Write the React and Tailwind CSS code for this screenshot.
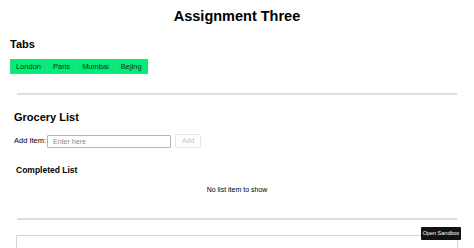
import React from "react";

const App = () => {
  const tabs = ["London", "Paris", "Mumbai", "Bejing"];

  return (
    <div className="relative w-[474px] h-[248px] overflow-hidden bg-white text-black font-['Liberation_Sans',Arial,sans-serif]">
      <h1 className="text-center text-[14.5px] font-bold pt-[7px] leading-[18px]">Assignment Three</h1>

      {/* Tabs */}
      <div className="px-[10px] mt-[12px]">
        <h2 className="text-[11px] font-bold leading-[14px]">Tabs</h2>
        <div className="flex mt-[8px]">
          {tabs.map((t) => (
            <button
              key={t}
              className="h-[15px] px-[5px] bg-[#00ee77] border border-[#2fd882] text-[7.5px] leading-[13px] text-[#0b2e1a]"
            >
              {t}
            </button>
          ))}
        </div>
      </div>

      <div className="mx-[17px] mt-[19px] h-[2px] bg-[#dedede]" />

      {/* Grocery list */}
      <div className="px-[14px] mt-[15px]">
        <h2 className="text-[11px] font-bold leading-[14px]">Grocery List</h2>
        <div className="flex items-center mt-[10px] text-[7.5px] text-black">
          <span className="mr-[1px]">Add Item:</span>
          <input
            placeholder="Enter here"
            className="w-[124px] h-[13px] border border-[#b5b5b5] rounded-[1px] px-[5px] text-[7px] placeholder:text-[#8a8a8a] outline-none"
          />
          <button className="ml-[4px] w-[26px] h-[14px] border border-[#e6e6e6] rounded-[2px] text-[#c4c4c4] text-[7px]">
            Add
          </button>
        </div>

        <h3 className="ml-[2px] mt-[16px] text-[8.5px] font-bold leading-[12px]">Completed List</h3>
        <p className="text-center text-[7px] mt-[9px] leading-[10px] text-black">No list item to show</p>
      </div>

      <div className="mx-[17px] mt-[23px] h-[2px] bg-[#dedede]" />

      <div className="mx-[16px] mt-[15px] h-[40px] border border-[#d6d6d6]" />

      <div className="absolute left-[421px] top-[227px] w-[40px] h-[13px] bg-[#121212] rounded-[1px] text-white text-[5.5px] flex items-center justify-center">
        Open Sandbox
      </div>
    </div>
  );
};

export default App;
